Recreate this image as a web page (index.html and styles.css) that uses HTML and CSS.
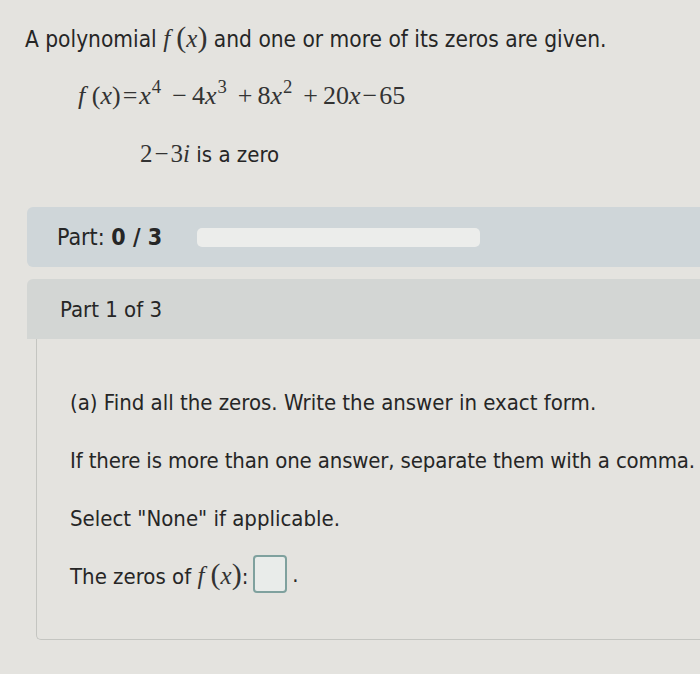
FILE: index.html
```html
<!DOCTYPE html>
<html lang="en">
<head>
    <meta charset="UTF-8">
    <meta name="viewport" content="width=device-width, initial-scale=1.0">
    <title>Polynomial zeros</title>
    <link rel="stylesheet" href="styles.css">
</head>
<body>

<div class="problem">
    <p class="intro">A polynomial <span class="math"><i>f</i> <span class="paren">(</span><i>x</i><span class="paren">)</span></span> and one or more of its zeros are given.</p>

    <p class="formula math">
        <i>f</i> (<i>x</i>)<span class="op-tight">=</span><i>x</i><sup>4</sup><span class="op">&minus;</span>4<i>x</i><sup>3</sup><span class="op">+</span>8<i>x</i><sup>2</sup><span class="op">+</span>20<i>x</i><span class="op-tight">&minus;</span>65
    </p>

    <p class="given"><span class="math">2<span class="op-tight">&minus;</span>3<i>i</i></span> is a zero</p>
</div>

<!-- Progress bar for parts -->
<div class="part-bar">
    <span class="part-label">Part: <b>0 / 3</b></span>
    <div class="progress"></div>
</div>

<div class="part-panel">
    <div class="part-header">Part 1 of 3</div>

    <div class="part-body">
        <p>(a) Find all the zeros. Write the answer in exact form.</p>
        <p class="tight">If there is more than one answer, separate them with a comma.</p>
        <p>Select "None" if applicable.</p>
        <p class="answer-row">
            <span>The zeros of <span class="math"><i>f</i> <span class="paren">(</span><i>x</i><span class="paren">)</span></span>:</span>
            <span class="answer-box"></span><span>.</span>
        </p>
    </div>
</div>

</body>
</html>
```

FILE: styles.css
```css
/* Colors */
:root {
    --page: #e4e3df;
    --text: #262626;
    --part-bar: #cfd6d9;
    --part-header: #d3d6d4;
    --progress: #ecedeb;
    --panel-border: #c4c5c1;
    --box-border: #7fa19e;
}

body {
    margin: 0;
    background-color: var(--page);
    color: var(--text);
    font-family: "DejaVu Sans Condensed", "DejaVu Sans", sans-serif;
    font-size: 22px;
    overflow: hidden;
    height: 674px;
}

p {
    margin: 0;
}

.math {
    font-family: "Liberation Serif", "DejaVu Serif", serif;
    font-size: 25px;
    color: #333;
}

.math sup {
    font-size: 0.72em;
    vertical-align: 0.6em;
    line-height: 0;
    margin-left: 1px;
}

.paren {
    font-size: 1.2em;
}

/* spacing around operators in the formula */
.op {
    padding: 0 5px 0 11px;
}

.op-tight {
    padding: 0 2px;
}

.problem {
    padding: 20px 0 0 25px;
}

.intro {
    font-size: 22.5px;
}

.formula {
    margin: 27px 0 0 53px;
    font-size: 26px;
}

.given {
    margin: 29px 0 0 115px;
}

.part-bar {
    display: flex;
    align-items: center;
    gap: 35px;
    margin: 39px 0 0 27px;
    height: 60px;
    padding-left: 30px;
    background-color: var(--part-bar);
    border-radius: 6px 0 0 6px;
    font-size: 23px;
}

.progress {
    width: 283px;
    height: 19px;
    background-color: var(--progress);
    border-radius: 5px;
}

.part-panel {
    margin: 12px 0 0 27px;
}

.part-header {
    height: 60px;
    display: flex;
    align-items: center;
    padding-left: 33px;
    background-color: var(--part-header);
    border-radius: 6px 0 0 0;
}

.part-body {
    margin-left: 9px;
    border-left: 1px solid var(--panel-border);
    border-bottom: 1px solid var(--panel-border);
    border-radius: 0 0 0 5px;
    padding: 51px 0 46px 33px;
    display: flex;
    flex-direction: column;
    gap: 33px;
    white-space: nowrap;
}

.tight {
    letter-spacing: -0.15px;
}

.answer-row {
    display: flex;
    align-items: center;
    gap: 5px;
    margin-top: -9px;
}

.answer-box {
    display: inline-block;
    width: 30px;
    height: 34px;
    border: 2px solid var(--box-border);
    border-radius: 4px;
    background-color: #e9ecea;
}
```
